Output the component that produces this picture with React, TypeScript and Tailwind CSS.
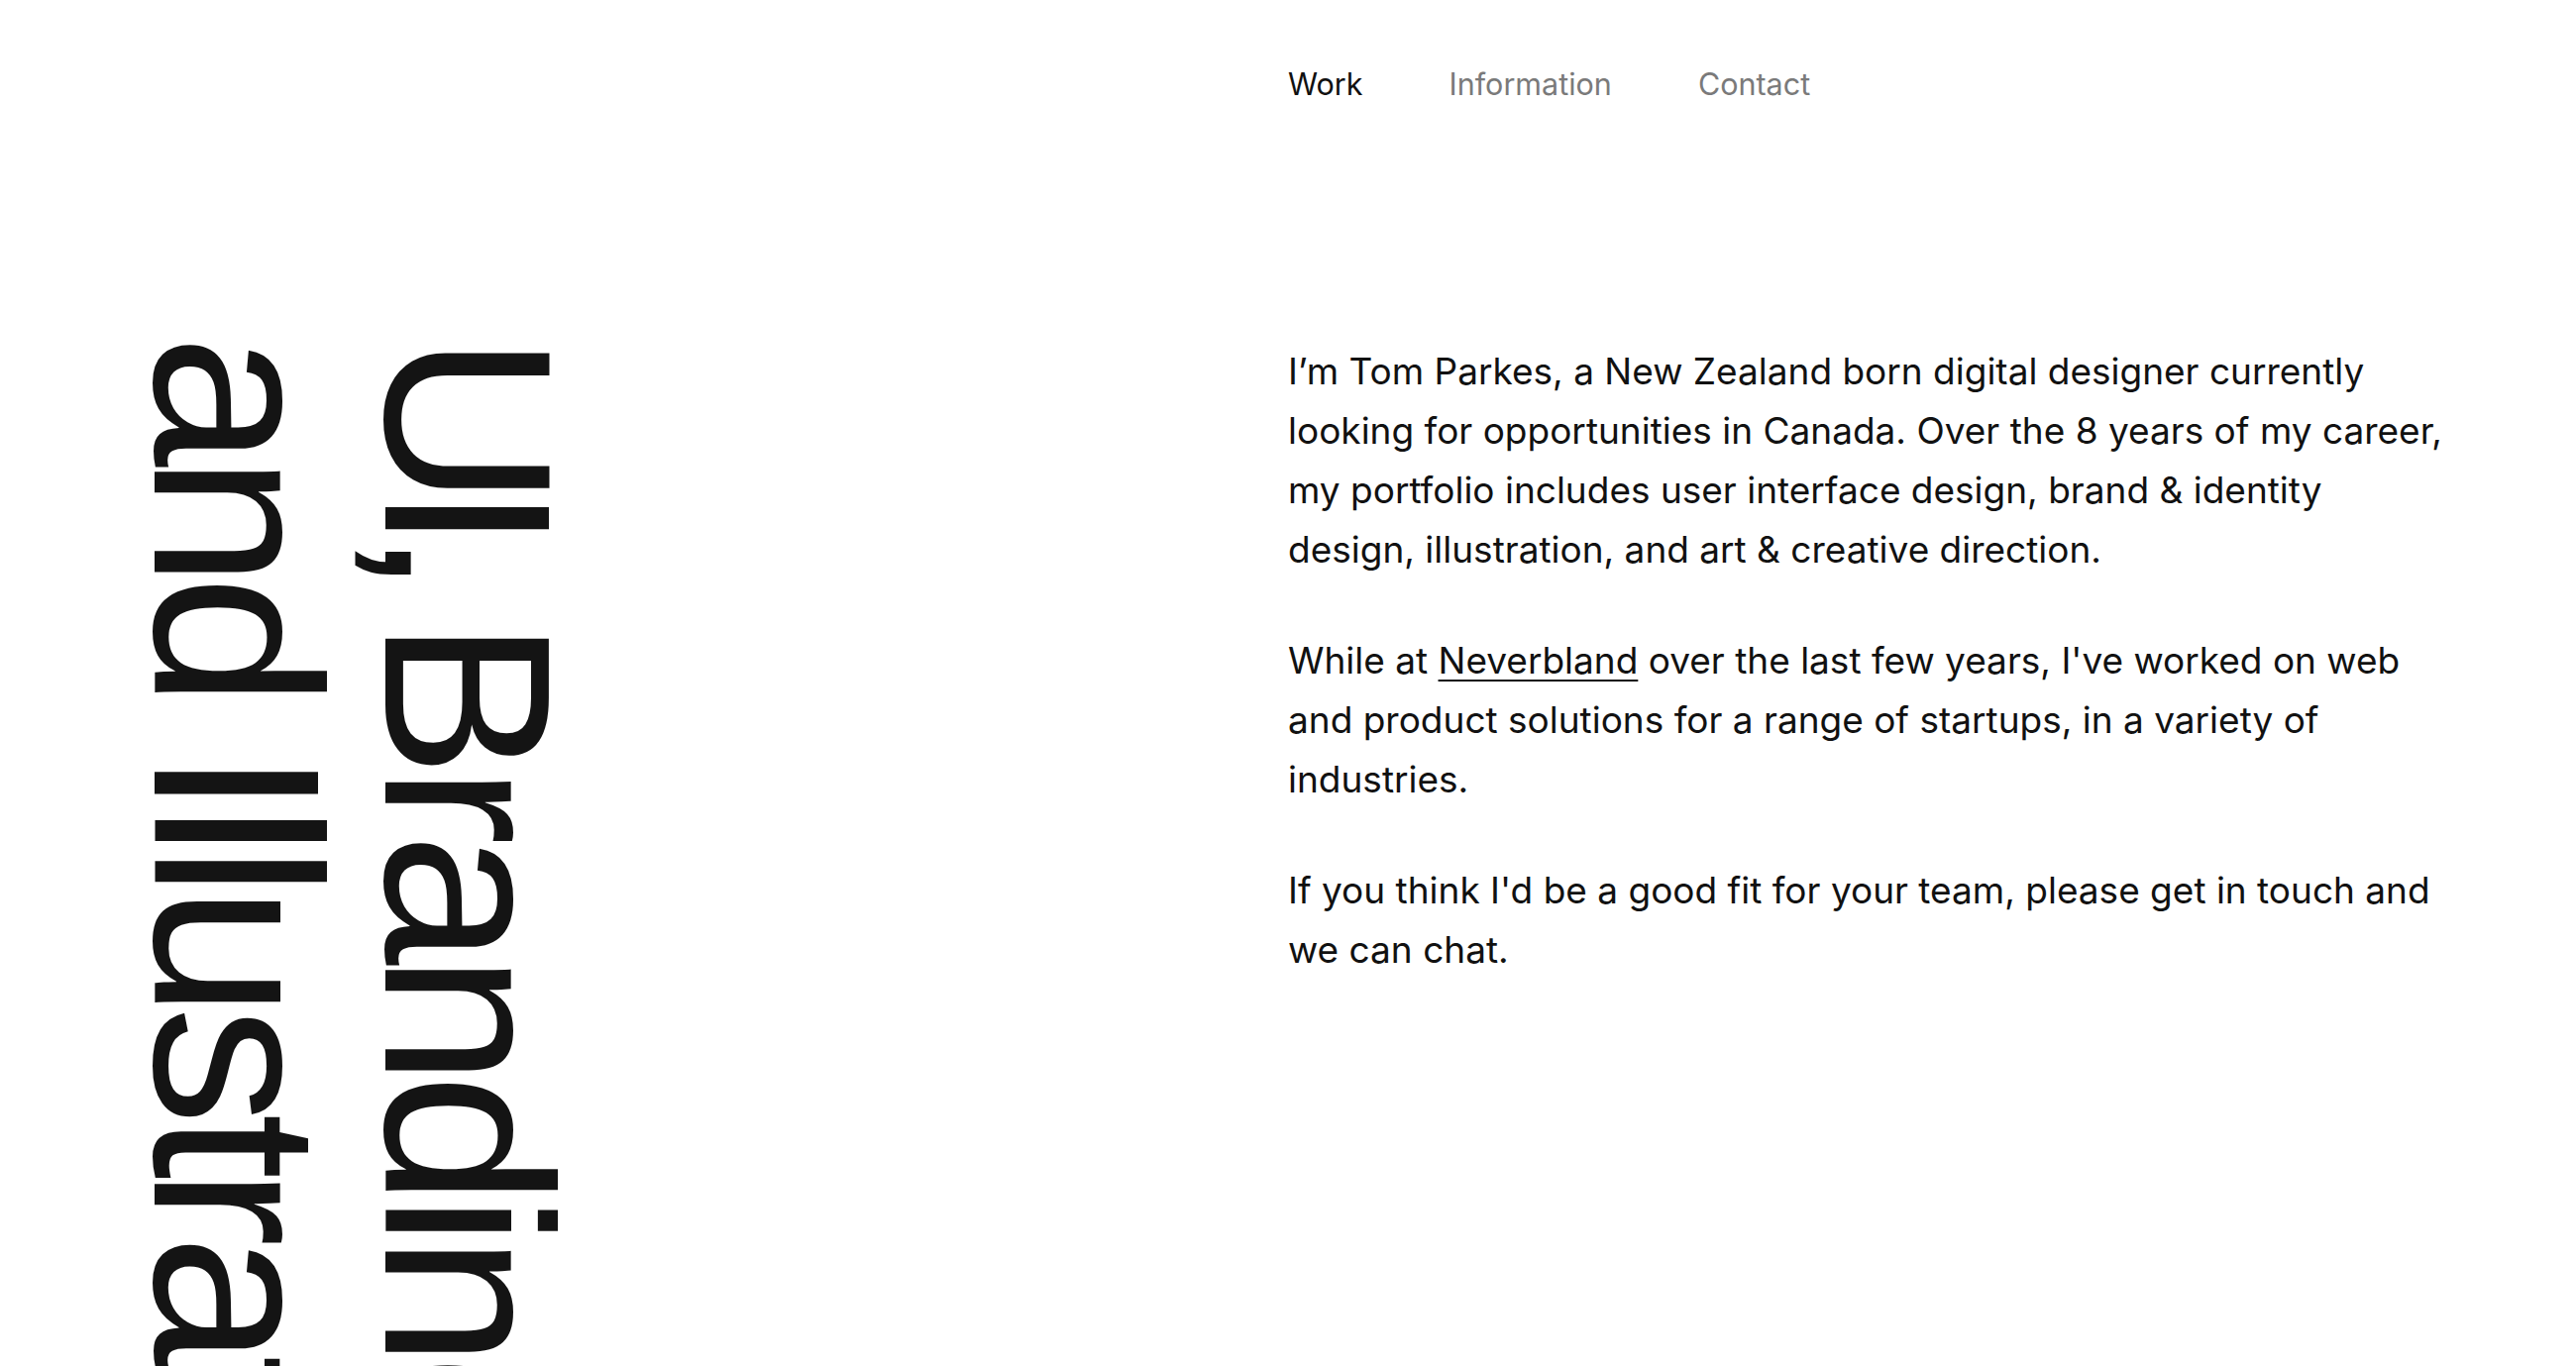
export default function App() {
  const nav = [
    { label: 'Work', active: true },
    { label: 'Information', active: false },
    { label: 'Contact', active: false },
  ]

  return (
    <div className="flex h-screen overflow-hidden bg-white font-['Inter','Noto_Sans',sans-serif] text-[#111111]">
      {/* Vertical title */}
      <div className="w-[1300px] shrink-0 pl-[122px] pt-[338px]">
        <h1 className="[writing-mode:vertical-rl] whitespace-nowrap font-['Liberation_Sans',Arial,sans-serif] text-[240px] font-normal leading-[233px] tracking-[-0.05em] text-[#141414]">
          <span className="tracking-[-0.09em]">UI, </span>Branding
          <br />
          and Illustration
        </h1>
      </div>

      {/* Right column */}
      <div className="flex flex-col">
        <nav className="flex gap-[87px] pt-[65px] text-[30.5px] leading-[40px]">
          {nav.map(item => (
            <a key={item.label} href="#"
              className={item.active ? 'text-[#111111]' : 'text-[#7a7a7a] hover:text-[#111111]'}>
              {item.label}
            </a>
          ))}
        </nav>

        <div className="mt-[240px] flex w-[1180px] flex-col gap-[52px] text-[37px] leading-[60px]">
          <p>
            I’m Tom Parkes, a New Zealand born digital designer currently<br />
            looking for opportunities in Canada. Over the 8 years of my career,<br />
            my portfolio includes user interface design, brand &amp; identity<br />
            design, illustration, and art &amp; creative direction.
          </p>
          <p>
            While at{' '}
            <a href="#" className="underline decoration-2 underline-offset-[6px]">Neverbland</a>{' '}
            over the last few years, I've worked on web<br />
            and product solutions for a range of startups, in a variety of<br />
            industries.
          </p>
          <p>
            If you think I'd be a good fit for your team, please get in touch and<br />
            we can chat.
          </p>
        </div>
      </div>
    </div>
  )
}
